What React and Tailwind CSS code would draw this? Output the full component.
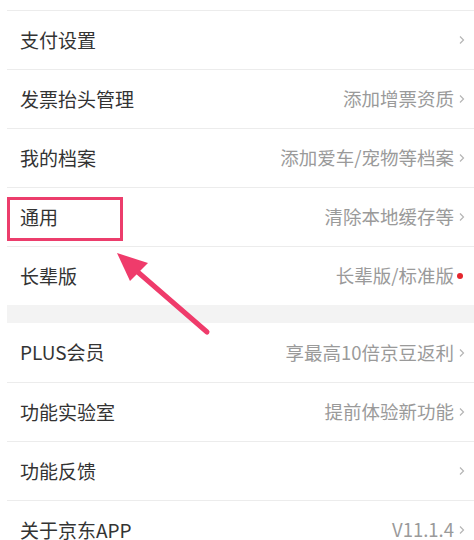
import React from 'react';

const groupOne = [
  { label: '支付设置', value: '' },
  { label: '发票抬头管理', value: '添加增票资质' },
  { label: '我的档案', value: '添加爱车/宠物等档案' },
  { label: '通用', value: '清除本地缓存等' },
  { label: '长辈版', value: '长辈版/标准版', dot: true },
];

const groupTwo = [
  { label: 'PLUS会员', value: '享最高10倍京豆返利' },
  { label: '功能实验室', value: '提前体验新功能' },
  { label: '功能反馈', value: '' },
  { label: '关于京东APP', value: 'V11.1.4' },
];

const Chevron = () => (
  <svg width="6" height="10" viewBox="0 0 6 10" className="ml-[5px] shrink-0">
    <path d="M1 1.5 L4.5 5 L1 8.5" fill="none" stroke="#b5b5b5" strokeWidth="1.2" />
  </svg>
);

const Row = ({ item, first }) => (
  <div
    className={`flex h-[59px] items-center border-[#ececec] pl-[13px] pr-[9px] ${first ? '' : 'border-t'}`}
  >
    <span className="flex-1 text-[19px] text-[#333]">{item.label}</span>
    <span className="text-[18.5px] text-[#9a9a9a]">{item.value}</span>
    {item.dot ? (
      <span className="ml-[3px] mr-[2px] h-[6px] w-[6px] rounded-full bg-[#e4262d]" />
    ) : (
      <Chevron />
    )}
  </div>
);

export default function App() {
  return (
    <div
      className="relative h-[540px] w-[474px] overflow-hidden bg-white"
      style={{ fontFamily: '"Noto Sans CJK SC", "Noto Sans", sans-serif' }}
    >
      <div className="pl-[7px] pt-[10px]">
        <div className="bg-white">
          {groupOne.map((item) => (
            <Row key={item.label} item={item} />
          ))}
        </div>
        <div className="h-[18px] bg-[#f3f3f3]" />
        <div className="bg-white">
          {groupTwo.map((item, i) => (
            <Row key={item.label} item={item} first={i === 0} />
          ))}
        </div>
      </div>

      {/* annotation overlay */}
      <div className="absolute left-[7px] top-[197px] h-[44px] w-[116px] border-[3px] border-[#ec3d6c]" />
      <svg className="absolute left-0 top-0" width="474" height="540">
        <line x1="207" y1="332" x2="132" y2="267" stroke="#ef3b6b" strokeWidth="5" strokeLinecap="round" />
        <polygon points="117,253 148,263 130,281" fill="#ef3b6b" />
      </svg>
    </div>
  );
}
